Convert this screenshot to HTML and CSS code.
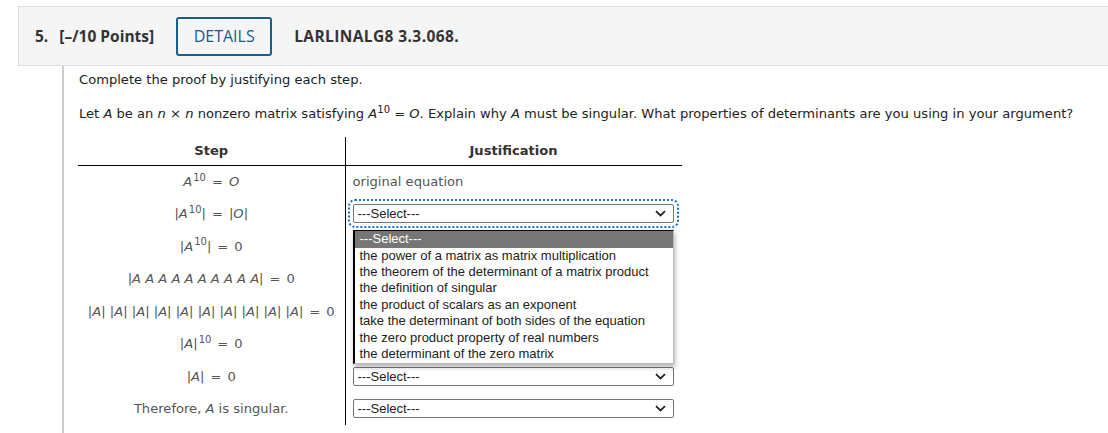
FILE: index.html
```html
<!DOCTYPE html>
<html lang="en">
<head>
  <meta charset="UTF-8">
  <title>LARLINALG8 3.3.068.</title>
  <link rel="stylesheet" href="styles.css">
</head>
<body>
  <div class="question">
    <div class="question__head">
      <span class="question__num">5.</span>
      <span class="question__points">[&ndash;/10 Points]</span>
      <button class="question__details">DETAILS</button>
      <span class="question__code">LARLINALG8 3.3.068.</span>
    </div>

    <div class="question__body">
      <p>Complete the proof by justifying each step.</p>
      <p class="question__prompt">Let <i>A</i> be an <i>n</i> &times; <i>n</i> nonzero matrix satisfying <i>A</i><sup>10</sup> = <i>O</i>. Explain why <i>A</i> must be singular. What properties of determinants are you using in your argument?</p>

      <table class="proof">
        <thead>
          <tr><th>Step</th><th>Justification</th></tr>
        </thead>
        <tbody>
          <tr>
            <td class="proof__step"><i>A</i><sup>10</sup><span class="eq">=</span><i>O</i></td>
            <td class="proof__why">original equation</td>
          </tr>
          <tr>
            <td class="proof__step">|<i>A</i><sup>10</sup>|<span class="eq">=</span>|<i>O</i>|</td>
            <td class="proof__why">
              <div class="pick">
                <select class="pick__select pick__select--focus">
                  <option>---Select---</option>
                </select>
                <ul class="pick__list">
                  <li class="is-active">---Select---</li>
                  <li>the power of a matrix as matrix multiplication</li>
                  <li>the theorem of the determinant of a matrix product</li>
                  <li>the definition of singular</li>
                  <li>the product of scalars as an exponent</li>
                  <li>take the determinant of both sides of the equation</li>
                  <li>the zero product property of real numbers</li>
                  <li>the determinant of the zero matrix</li>
                </ul>
              </div>
            </td>
          </tr>
          <tr>
            <td class="proof__step">|<i>A</i><sup>10</sup>|<span class="eq">=</span>0</td>
            <td class="proof__why"><select class="pick__select"><option>---Select---</option></select></td>
          </tr>
          <tr>
            <td class="proof__step">|<i>A A A A A A A A A A</i>|<span class="eq">=</span>0</td>
            <td class="proof__why"><select class="pick__select"><option>---Select---</option></select></td>
          </tr>
          <tr>
            <td class="proof__step">|<i>A</i>| |<i>A</i>| |<i>A</i>| |<i>A</i>| |<i>A</i>| |<i>A</i>| |<i>A</i>| |<i>A</i>| |<i>A</i>| |<i>A</i>|<span class="eq">=</span>0</td>
            <td class="proof__why"><select class="pick__select"><option>---Select---</option></select></td>
          </tr>
          <tr>
            <td class="proof__step">|<i>A</i>|<sup>10</sup><span class="eq">=</span>0</td>
            <td class="proof__why"><select class="pick__select"><option>---Select---</option></select></td>
          </tr>
          <tr>
            <td class="proof__step">|<i>A</i>|<span class="eq">=</span>0</td>
            <td class="proof__why"><select class="pick__select"><option>---Select---</option></select></td>
          </tr>
          <tr>
            <td class="proof__step">Therefore, <i>A</i> is singular.</td>
            <td class="proof__why"><select class="pick__select"><option>---Select---</option></select></td>
          </tr>
        </tbody>
      </table>
    </div>
  </div>
</body>
</html>
```

FILE: styles.css
```css
* {
  box-sizing: border-box;
}

body {
  margin: 0;
  overflow: hidden;
  background: #fff;
  font-family: "DejaVu Sans", Verdana, sans-serif;
  font-size: 13.1px;
  color: #222;
}

.question__head {
  display: flex;
  align-items: center;
  height: 60px;
  margin: 6px -20px 0 18px;
  padding-left: 16px;
  background: #f5f5f5;
  border: 1px solid #ddd;
  font-family: "Open Sans", sans-serif;
  font-size: 15.5px;
  color: #333;
}

.question__num,
.question__points,
.question__code {
  font-weight: 700;
}

.question__points {
  margin-left: 11px;
}

.question__code {
  letter-spacing: 0.4px;
}

.question__details {
  width: 96px;
  height: 39px;
  margin: 0 22px;
  padding: 0;
  background: transparent;
  border: 2px solid #1a5e8d;
  border-radius: 3px;
  font-family: "Open Sans", sans-serif;
  font-size: 16px;
  color: #1d5a8a;
}

.question__body {
  margin-left: 62px;
  padding: 5px 0 10px 15px;
  border-left: 2px solid #cbcbcb;
}

.question__body p {
  margin: 0;
  line-height: 18px;
}

.question__prompt {
  margin-top: 16px !important;
}

.question__body sup {
  font-size: 10px;
  line-height: 0;
}

.proof {
  margin: 14px 0 0 -1px;
  border-collapse: collapse;
}

.proof th {
  height: 28px;
  padding: 0;
  border-bottom: 1px solid #000;
  font-weight: bold;
  color: #333;
  vertical-align: middle;
}

.proof th:first-child,
.proof__step {
  width: 267px;
  border-right: 1px solid #000;
}

.proof td {
  height: 32.5px;
  padding: 0;
  vertical-align: middle;
}

.proof__step {
  text-align: center;
  color: #555;
  white-space: nowrap;
}

.proof__step sup {
  margin-left: 1px;
}

.eq {
  margin: 0 6px;
}

.proof__why {
  width: 336px;
  padding: 0 8px 0 7px !important;
  color: #555;
}

.pick {
  position: relative;
}

.pick__select {
  display: block;
  width: 321px;
  height: 19px;
  padding: 0 0 0 4px;
  -webkit-appearance: none;
  appearance: none;
  font-family: "Liberation Sans", Arial, sans-serif;
  font-size: 13px;
  color: #222;
  border: 1px solid #767676;
  border-radius: 2px;
  background: #fff url("data:image/svg+xml,%3Csvg xmlns='http://www.w3.org/2000/svg' width='11' height='7' viewBox='0 0 11 7'%3E%3Cpath d='M1 1.2l4.5 4.3 4.5-4.3' fill='none' stroke='%23222' stroke-width='1.8'/%3E%3C/svg%3E") no-repeat right 7px center;
}

.pick__select--focus {
  outline: 2px dotted #1a6fd1;
  outline-offset: 3px;
}

.pick__list {
  position: absolute;
  top: 26px;
  left: 0;
  z-index: 5;
  width: 321px;
  margin: 0;
  padding: 0;
  list-style: none;
  background: #fff;
  border: 1px solid #000;
  border-left-width: 2px;
  border-right-color: #bbb;
  border-bottom-color: #bbb;
  box-shadow: 1px 3px 5px rgba(0, 0, 0, 0.3);
  font-family: "Liberation Sans", Arial, sans-serif;
  font-size: 13px;
  line-height: 16.4px;
  color: #222;
}

.pick__list li {
  padding-left: 5px;
  white-space: nowrap;
}

.pick__list .is-active {
  background: #767676;
  color: #fff;
}
```
